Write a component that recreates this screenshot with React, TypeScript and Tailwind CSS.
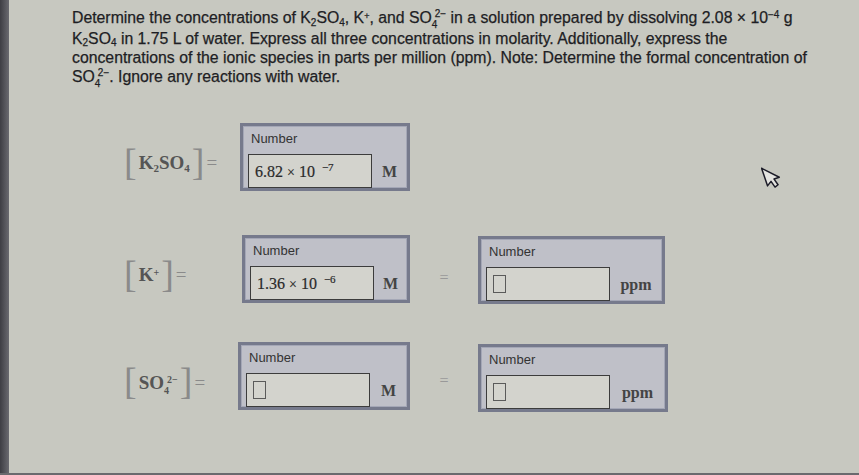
import React from "react";

const sans = { fontFamily: '"Liberation Sans", Arial, sans-serif' };
const serif = { fontFamily: '"Liberation Serif", "Times New Roman", serif' };

// sub and sup stacked over each other, as in SO4 2-
const Ion: React.FC<{ sub: string; sup: string; size?: string }> = ({ sub, sup, size = "text-[10px]" }) => (
  <span className={`inline-flex flex-col align-middle leading-[9px] ${size}`}>
    <span className="pl-[3px]">{sup}</span>
    <span className="pt-[2px]">{sub}</span>
  </span>
);

// a small empty square shown inside blank answer fields
const Blank = () => (
  <span className="inline-block h-[18px] w-[13px] border border-[#5a5a5a] bg-[#d4d4ce]" />
);

interface AnswerProps {
  value?: React.ReactNode;
  unit: string;
  width: string;
}

const AnswerBox: React.FC<AnswerProps> = ({ value, unit, width }) => (
  <div
    className={`${width} h-[68px] border-[3px] border-[#767a8c] bg-[#bfc0c8] pl-[5px] pt-[6px] shadow-[inset_0_0_0_1px_#a4a7b6]`}
  >
    <div className="pl-[3px] text-[13px] leading-[14px] text-[#333]" style={sans}>
      Number
    </div>
    <div className="mt-[8px] flex items-center">
      <div className="flex h-[34px] w-[124px] items-center border border-[#3c3c3c] bg-[#d3d3cd] px-[6px]">
        {value ?? <Blank />}
      </div>
      <div
        className="flex-1 pt-[2px] text-center text-[16px] font-bold text-[#444]"
        style={serif}
      >
        {unit}
      </div>
    </div>
  </div>
);

const Bracket: React.FC<{ children: React.ReactNode }> = ({ children }) => (
  <div className="flex items-center text-[#555]" style={serif}>
    <span className="text-[38px] font-light leading-none text-[#8a8a8a]">[</span>
    <span className="px-[2px] pt-[4px] text-[19px] font-bold">{children}</span>
    <span className="text-[38px] font-light leading-none text-[#8a8a8a]">]</span>
    <span className="ml-[2px] pt-[4px] text-[19px] text-[#8a8a8a]">=</span>
  </div>
);

const Sci: React.FC<{ m: string; e: string }> = ({ m, e }) => (
  <span className="pt-[2px] text-[16px] text-[#2a2a2a] [-webkit-text-stroke:0.2px_#2a2a2a]" style={serif}>
    {m} <span className="text-[14px]">×</span> 10
    <sup className="ml-[7px] text-[11px]">{e}</sup>
  </span>
);

const Equals = () => (
  <div className="w-[68px] text-center text-[16px] text-[#999]" style={serif}>
    =
  </div>
);

export default function App() {
  return (
    <div className="relative h-[475px] w-[859px] overflow-hidden bg-[#c7c8c0]">
      <div className="absolute left-0 top-0 h-full w-[9px] bg-gradient-to-r from-[#3e3e44] to-[#6a6a70]" />
      <div className="absolute bottom-0 left-0 h-[2px] w-full bg-[#6a6a6e]" />

      <div
        className="pl-[72px] pt-[8px] text-[15.8px] leading-[19px] text-[#1e1e24] [-webkit-text-stroke:0.25px_#1e1e24]"
        style={sans}
      >
        <p>
          Determine the concentrations of K<sub className="text-[10px]">2</sub>SO
          <sub className="text-[10px]">4</sub>, K<sup className="text-[9px]">+</sup>, and SO
          <Ion sub="4" sup="2−" /> in a solution prepared by dissolving 2.08 × 10
          <sup className="text-[10px]">−4</sup> g
          <br />
          K<sub className="text-[10px]">2</sub>SO<sub className="text-[10px]">4</sub> in 1.75 L
          of water. Express all three concentrations in molarity. Additionally, express the
          <br />
          concentrations of the ionic species in parts per million (ppm). Note: Determine the
          formal concentration of
          <br />
          SO<Ion sub="4" sup="2−" />. Ignore any reactions with water.
        </p>
      </div>

      <div className="mt-[35px] flex flex-col pl-[124px]">
        <div className="flex items-center">
          <div className="w-[116px] pt-[10px]">
            <Bracket>
              K<sub className="text-[11px]">2</sub>SO<sub className="text-[11px]">4</sub>
            </Bracket>
          </div>
          <AnswerBox width="w-[170px]" unit="M" value={<Sci m="6.82" e="−7" />} />
        </div>

        <div className="mt-[43px] flex items-center">
          <div className="w-[118px] pt-[10px]">
            <Bracket>
              K<sup className="text-[10px]">+</sup>
            </Bracket>
          </div>
          <AnswerBox width="w-[168px]" unit="M" value={<Sci m="1.36" e="−6" />} />
          <div className="pt-[18px]">
            <Equals />
          </div>
          <div className="pt-[2px]">
            <AnswerBox width="w-[187px]" unit="ppm" />
          </div>
        </div>

        <div className="mt-[37px] flex items-center">
          <div className="w-[114px] pt-[10px]">
            <Bracket>
              SO
              <Ion sub="4" sup="2−" size="text-[10px]" />
            </Bracket>
          </div>
          <AnswerBox width="w-[172px]" unit="M" />
          <div className="pt-[10px]">
            <Equals />
          </div>
          <div className="pt-[3px]">
            <AnswerBox width="w-[190px]" unit="ppm" />
          </div>
        </div>
      </div>

      {/* mouse pointer */}
      <svg
        className="absolute left-[761px] top-[164px]"
        width="22"
        height="26"
        viewBox="0 0 22 26"
      >
        <path
          d="M3 2 L18 15 L12.5 15.5 L15 22 L11.5 23.5 L9 17 L4.5 20.5 Z"
          fill="#e4e4e0"
          stroke="#1c1c28"
          strokeWidth="1.5"
          strokeLinejoin="round"
          transform="rotate(-14 11 13)"
        />
      </svg>
    </div>
  );
}
